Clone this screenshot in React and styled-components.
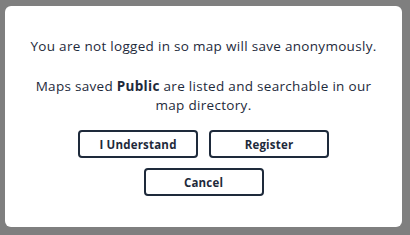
import React from "react";
import styled, { createGlobalStyle } from "styled-components";

const GlobalStyle = createGlobalStyle`
  html, body {
    margin: 0;
    padding: 0;
    background: #7f7f7f;
  }
  body {
    font-family: "Open Sans", "Liberation Sans", sans-serif;
  }
`;

const Backdrop = styled.div`
  width: 410px;
  height: 235px;
  box-sizing: border-box;
  padding: 6px 8px 8px 5px;
  display: flex;
`;

const Dialog = styled.div`
  flex: 1;
  background: #fff;
  border-radius: 6px;
  padding: 31px 20px 0;
  display: flex;
  flex-direction: column;
  align-items: center;
  color: #1e2a3b;
`;

const Message = styled.p`
  margin: 0 0 ${(p) => p.gap || 0}px;
  font-size: 13.5px;
  letter-spacing: 0.3px;
  line-height: 19px;
  text-align: center;
  max-width: 358px;
`;

const Strong = styled.b`
  font-weight: 700;
`;

const Actions = styled.div`
  margin-top: 15px;
  display: flex;
  flex-wrap: wrap;
  justify-content: center;
  gap: 10px 11px;
  width: 260px;
`;

const Button = styled.button`
  width: 120px;
  height: 28px;
  box-sizing: border-box;
  background: #fff;
  border: 2px solid #1e2a3b;
  border-radius: 4px;
  color: #1e2a3b;
  font-family: inherit;
  font-size: 11.5px;
  font-weight: 700;
  letter-spacing: 0.2px;
  cursor: pointer;
  padding: 0;
`;

export default function App() {
  return (
    <>
      <GlobalStyle />
      <Backdrop>
        <Dialog>
          <Message gap={21}>You are not logged in so map will save anonymously.</Message>
          <Message>
            Maps saved <Strong>Public</Strong> are listed and searchable in our map directory.
          </Message>
          <Actions>
            <Button>I Understand</Button>
            <Button>Register</Button>
            <Button>Cancel</Button>
          </Actions>
        </Dialog>
      </Backdrop>
    </>
  );
}
